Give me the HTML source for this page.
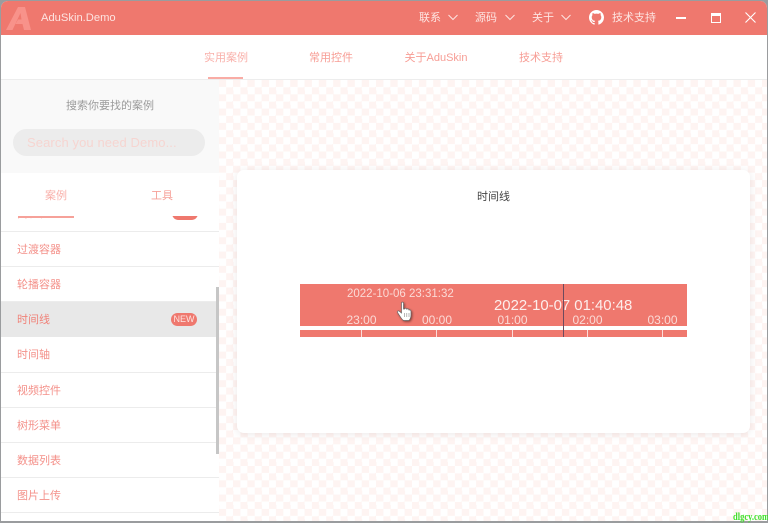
<!DOCTYPE html>
<html lang="zh">
<head>
<meta charset="utf-8">
<title>AduSkin.Demo</title>
<style>
*{box-sizing:border-box;margin:0;padding:0}
html,body{width:768px;height:523px;overflow:hidden;background:#9a9c9e}
body{position:relative;font-family:"Liberation Sans","Noto Sans CJK SC",sans-serif;font-size:11px;color:#f0776d}
.a{position:absolute;white-space:nowrap}
#win{position:absolute;left:1px;top:1px;width:766px;height:520px;background:#fff;border-radius:7px 7px 0 0;overflow:hidden}
#title{position:absolute;left:0;top:0;width:766px;height:34px;background:#ef786e}
.w{color:#fde4e1}
.nav{color:#f79d95;font-size:11px;top:50px;line-height:16px;transform:translateX(-50%)}
#right{position:absolute;left:218px;top:79px;width:548px;height:441px;background:repeating-conic-gradient(#fef4f2 0 25%,#fff 0 50%);background-size:14.3px 14.3px;background-position:7.15px 0}
#side{position:absolute;left:0;top:79px;width:218px;height:441px;background:#fff;overflow:hidden}
#search{position:absolute;left:0;top:0;width:218px;height:93px;background:#f9f9f9}
#input{position:absolute;left:12px;top:49px;width:192px;height:27px;border-radius:14px;background:#ececec;color:#f6d5d1;font-size:13px;line-height:28px;padding-left:14px;letter-spacing:.1px}
.it{position:absolute;left:0;width:218px;height:35px;border-bottom:1px solid #ececec;padding-left:16px;line-height:37px;font-size:11px;color:#f4918a}
#card{position:absolute;left:237px;top:170px;width:513px;height:263px;background:#fff;border-radius:7px;box-shadow:0 1px 8px rgba(120,90,90,.14)}
.tl{color:#fbdad6;font-size:12px;line-height:14px;top:313px;transform:translateX(-50%)}
.tick{position:absolute;top:330px;width:1px;height:7px;background:#fbdcd9}
</style>
</head>
<body>
<div id="win">
  <div id="title"></div>
  <div id="right"></div>
  <div id="side">
    <div id="search"></div>
    <div class="a" style="left:0;width:218px;text-align:center;top:18px;color:#9b9b9b;line-height:16px">搜索你要找的案例</div>
    <div id="input">Search you need Demo...</div>
    <div class="a" style="left:44px;top:108px;color:#f9b0aa;line-height:16px">案例</div>
    <div class="a" style="left:150px;top:108px;color:#f6a199;line-height:16px">工具</div>
    <div class="a" style="left:0;top:136px;width:218px;height:16px;overflow:hidden">
      <div class="a" style="left:16px;top:-10px;color:#f4918a;font-size:11px;line-height:16px">列表框</div>
      <div class="a" style="left:17px;top:0;width:56px;height:1.5px;background:#f6a199"></div>
      <div class="a" style="left:171px;top:-9px;width:26px;height:13px;border-radius:7px;background:#ef786e"></div>
    </div>
    <div class="a" style="left:0;top:151px;width:218px;height:1px;background:#ececec"></div>
    <div class="it" style="top:152px">过渡容器</div>
    <div class="it" style="top:187px">轮播容器</div>
    <div class="it" style="top:222px;background:#e8e8e8;border-bottom:0;color:#f0837a">时间线
      <span class="a" style="left:170px;top:11px;width:26px;height:13px;border-radius:7px;background:#ef786e;color:#fde4e1;font-size:9px;line-height:13px;text-align:center">NEW</span>
    </div>
    <div class="it" style="top:257px;height:36px">时间轴</div>
    <div class="it" style="top:293px">视频控件</div>
    <div class="it" style="top:328px">树形菜单</div>
    <div class="it" style="top:363px">数据列表</div>
    <div class="it" style="top:398px">图片上传</div>
    <div class="a" style="left:215px;top:207px;width:3px;height:167px;background:#c6c6c6"></div>
  </div>
</div>

<svg class="a" style="left:5px;top:5px" width="27" height="26" viewBox="0 0 27 26"><path d="M1 25 L13 2 H20 L26 25 H19 L17.500 19 H10.500 L13 14.500 H16.500 L15.500 8 L7.500 25 Z" fill="#f8928a"/></svg>
<div class="a" style="left:41px;top:10px;color:#fde4e1;font-size:11.200px;line-height:16px">AduSkin.Demo</div>

<div class="a w" style="left:419px;top:10px;line-height:16px">联系</div>
<svg class="a" style="left:448px;top:14px" width="10" height="7" viewBox="0 0 10 7"><path d="M.5 1 L5 5.500 L9.500 1" fill="none" stroke="#fde4e1" stroke-width="1"/></svg>
<div class="a w" style="left:475px;top:10px;line-height:16px">源码</div>
<svg class="a" style="left:505px;top:14px" width="10" height="7" viewBox="0 0 10 7"><path d="M.5 1 L5 5.500 L9.500 1" fill="none" stroke="#fde4e1" stroke-width="1"/></svg>
<div class="a w" style="left:532px;top:10px;line-height:16px">关于</div>
<svg class="a" style="left:561px;top:14px" width="10" height="7" viewBox="0 0 10 7"><path d="M.5 1 L5 5.500 L9.500 1" fill="none" stroke="#fde4e1" stroke-width="1"/></svg>
<svg class="a" style="left:589px;top:10px" width="15" height="15" viewBox="0 0 16 16"><path fill="#fff" d="M8 0C3.580 0 0 3.580 0 8c0 3.540 2.290 6.530 5.470 7.590.4.070.55-.17.55-.38 0-.19-.01-.82-.01-1.490-2.010.37-2.530-.49-2.690-.94-.09-.23-.48-.94-.82-1.130-.28-.15-.68-.52-.01-.53.63-.01 1.080.58 1.230.82.72 1.210 1.870.87 2.330.66.070-.52.280-.87.510-1.070-1.780-.2-3.640-.89-3.640-3.950 0-.87.310-1.590.820-2.150-.08-.2-.36-1.020.08-2.120 0 0 .67-.21 2.200.82.640-.18 1.320-.27 2-.27s1.360.09 2 .27c1.530-1.040 2.200-.82 2.200-.82.440 1.100.16 1.920.08 2.120.51.560.82 1.270.82 2.150 0 3.070-1.870 3.750-3.650 3.950.29.250.54.730.54 1.480 0 1.070-.01 1.930-.01 2.200 0 .21.150.46.550.38A8.010 8.010 0 0 0 16 8c0-4.420-3.580-8-8-8z"/></svg>
<div class="a w" style="left:612px;top:10px;line-height:16px">技术支持</div>
<div class="a" style="left:676px;top:17px;width:10px;height:2px;background:#fff"></div>
<div class="a" style="left:711px;top:13px;width:10px;height:10px;border:1px solid #fff;border-top:3px solid #fff"></div>
<svg class="a" style="left:745px;top:12px" width="11" height="11" viewBox="0 0 11 11"><path d="M.5 .5 L10.500 10.500 M10.500 .5 L.5 10.500" stroke="#fff" stroke-width="1.100"/></svg>

<div class="a nav" style="left:226px;color:#f9b0aa">实用案例</div>
<div class="a nav" style="left:331px">常用控件</div>
<div class="a nav" style="left:436px">关于AduSkin</div>
<div class="a nav" style="left:541px">技术支持</div>
<div class="a" style="left:208px;top:77px;width:35px;height:2px;background:#f9aca5"></div>
<div class="a" style="left:1px;top:79px;width:766px;height:1px;background:#ededed"></div>

<div id="card"></div>
<div class="a" style="left:237px;width:513px;text-align:center;top:189px;color:#444;font-size:11px;line-height:16px">时间线</div>

<div class="a" style="left:300px;top:284px;width:387px;height:42px;background:#ef786e"></div>
<div class="a" style="left:300px;top:330px;width:387px;height:7px;background:#ef786e"></div>
<div class="tick" style="left:361px"></div>
<div class="tick" style="left:436px"></div>
<div class="tick" style="left:512px"></div>
<div class="tick" style="left:587px"></div>
<div class="tick" style="left:662px"></div>
<div class="a" style="left:347px;top:287px;color:#fbdad6;font-size:11.500px;line-height:14px">2022-10-06 23:31:32</div>
<div class="a" style="left:494px;top:297px;color:#fdeeec;font-size:14.900px;line-height:18px">2022-10-07 01:40:48</div>
<div class="a tl" style="left:361.500px">23:00</div>
<div class="a tl" style="left:437px">00:00</div>
<div class="a tl" style="left:512.500px">01:00</div>
<div class="a tl" style="left:587.500px">02:00</div>
<div class="a tl" style="left:662.500px">03:00</div>
<div class="a" style="left:563px;top:284px;width:1px;height:53px;background:#6d4a5e"></div>
<svg class="a" style="left:396px;top:301px;filter:drop-shadow(1px 1px 1px rgba(0,0,0,.45))" width="17" height="21" viewBox="0 0 16 21"><path d="M5 2 C5 .8 7 .8 7 2 V8 H8 C8.500 7 10 7 10.300 8.200 C11 7.500 12.300 7.800 12.500 9 C13.500 8.600 14.500 9.200 14.500 10.500 V14 C14.500 17 13 19.500 12 19.500 H7.500 C6 19.500 4.500 17 3 14.500 L1 11.500 C.5 10.500 1.500 9.500 2.500 10 L5 12 Z" fill="#fff" stroke="#666" stroke-width=".7"/><path d="M8 12 V16 M10.300 12 V16 M12.500 12 V16" stroke="#888" stroke-width=".6"/></svg>

<div class="a" style="left:733px;top:512px;color:#3fe02a;font-family:'Liberation Serif',serif;font-weight:bold;font-size:10px;line-height:11px;transform:scaleX(.85);transform-origin:left top">dlgcy.com</div>
</body>
</html>
